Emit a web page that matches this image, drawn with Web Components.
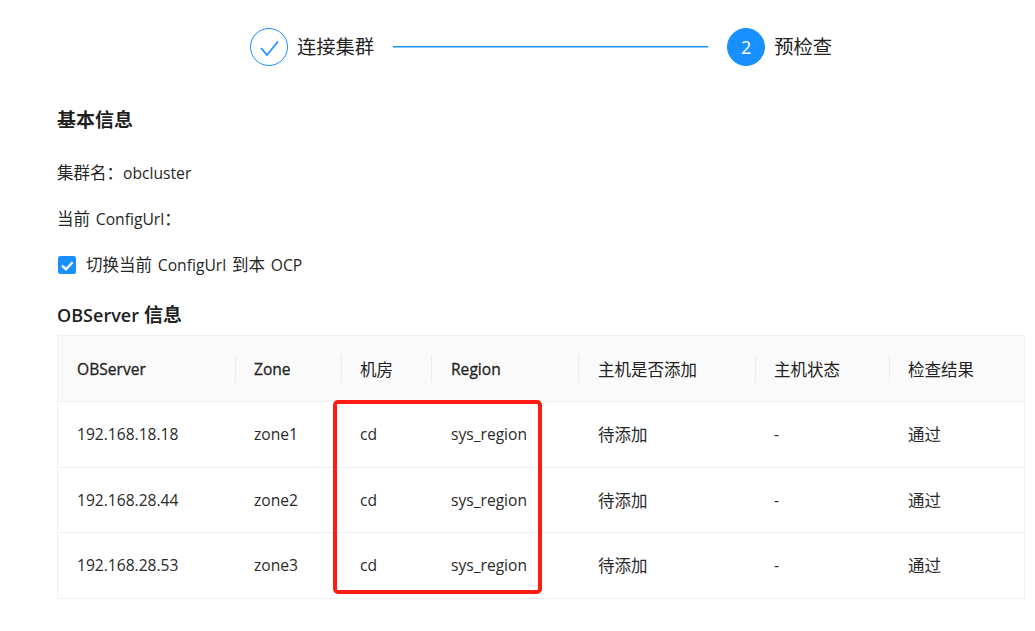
<!DOCTYPE html>
<html lang="zh">
<head>
<meta charset="utf-8">
<title>预检查</title>
<style>
    html, body { margin: 0; background: #fff; }
    body {
        width: 1035px;
        height: 631px;
        overflow: hidden;
        font-family: "Open Sans", "Noto Sans CJK SC", sans-serif;
        font-size: 16.5px;
        color: #262626;
    }
</style>
</head>
<body>
<precheck-page>
    <step-bar></step-bar>
    <section-title style="margin-top: 40px">基本信息</section-title>
    <info-line style="margin-top: 27px">集群名：<la-t>obcluster</la-t></info-line>
    <info-line style="margin-top: 22px">当前 <la-t>ConfigUrl</la-t>：</info-line>
    <check-line style="margin-top: 22px">切换当前 <la-t>ConfigUrl</la-t> 到本 <la-t>OCP</la-t></check-line>
    <section-title style="margin-top: 24px"><la-t>OBServer</la-t> 信息</section-title>
    <server-table style="margin-top: 6px"></server-table>
</precheck-page>

<script>
// Latin runs are set a little smaller so Open Sans takes the width of the original face
class LaT extends HTMLElement {
    constructor() {
        super();
        this.attachShadow({mode: 'open'}).innerHTML = `
            <style>
                :host { display: inline-block; font-size: .95em; }
            </style>
            <slot></slot>`;
    }
}

class PrecheckPage extends HTMLElement {
    constructor() {
        super();
        this.attachShadow({mode: 'open'}).innerHTML = `
            <style>
                :host { display: block; padding: 28px 10px 0 57px; }
            </style>
            <slot></slot>`;
    }
}

class StepBar extends HTMLElement {
    constructor() {
        super();
        this.attachShadow({mode: 'open'}).innerHTML = `
            <style>
                :host { display: flex; align-items: center; height: 38px; padding-left: 193px; font-size: 19.3px; color: #222; }
                .circle {
                    width: 38px; height: 38px; box-sizing: border-box; border-radius: 50%;
                    border: 1.5px solid #1890ff; display: flex; align-items: center; justify-content: center;
                    flex: none;
                }
                .circle.on { background: #1890ff; color: #fff; font-size: 18px; }
                .label { margin-left: 9px; white-space: nowrap; line-height: 38px; }
                .line { width: 315px; height: 2px; background: linear-gradient(#1890ff 50%, #8cc8ff 50%); margin: 0 19px; flex: none; }
            </style>
            <div class="circle">
                <svg width="20" height="17" viewBox="0 0 20 17" fill="none">
                    <path d="M2 9 L8 16 L19 2.5" stroke="#1890ff" stroke-width="1.7"/>
                </svg>
            </div>
            <span class="label">连接集群</span>
            <div class="line"></div>
            <div class="circle on">2</div>
            <span class="label">预检查</span>`;
    }
}

class SectionTitle extends HTMLElement {
    constructor() {
        super();
        this.attachShadow({mode: 'open'}).innerHTML = `
            <style>
                :host { display: block; font-size: 19px; font-weight: 600; line-height: 28px; color: #1f1f1f; }
            </style>
            <slot></slot>`;
    }
}

class InfoLine extends HTMLElement {
    constructor() {
        super();
        this.attachShadow({mode: 'open'}).innerHTML = `
            <style>
                :host { display: block; line-height: 24px; word-spacing: 1.5px; }
            </style>
            <slot></slot>`;
    }
}

class CheckLine extends HTMLElement {
    constructor() {
        super();
        this.attachShadow({mode: 'open'}).innerHTML = `
            <style>
                :host { display: flex; align-items: center; line-height: 24px; word-spacing: 1.5px; }
                .box {
                    width: 18px; height: 18px; margin: 0 10px 0 1px; border-radius: 2.5px; background: #1890ff;
                    display: flex; flex: none;
                }
            </style>
            <span class="box">
                <svg width="18" height="18" viewBox="0 0 18 18" fill="none">
                    <path d="M4 9.6 L8 13.2 L14.6 6.2" stroke="#fff" stroke-width="2.4"/>
                </svg>
            </span>
            <span><slot></slot></span>`;
    }
}

class ServerTable extends HTMLElement {
    constructor() {
        super();
        const head = ['OBServer', 'Zone', '机房', 'Region', '主机是否添加', '主机状态', '检查结果'];
        const rows = [
            ['192.168.18.18', 'zone1', 'cd', 'sys_region', '待添加', '-', '通过'],
            ['192.168.28.44', 'zone2', 'cd', 'sys_region', '待添加', '-', '通过'],
            ['192.168.28.53', 'zone3', 'cd', 'sys_region', '待添加', '-', '通过']
        ];
        const widths = [177, 106, 90, 147, 177, 134, 135];
        const isLatin = t => /^[\x00-\x7f]+$/.test(t);
        const cell = (tag, t) => `<${tag}${isLatin(t) ? ' class="la"' : ''}>${t}</${tag}>`;
        this.attachShadow({mode: 'open'}).innerHTML = `
            <style>
                :host { display: block; position: relative; width: 968px; }
                table { border-collapse: separate; border-spacing: 0; table-layout: fixed; width: 968px; border: 1px solid #f0f0f0; border-bottom: 0; box-sizing: border-box; }
                th, td { padding: 0 0 0 19px; text-align: left; border-bottom: 1px solid #f0f0f0; white-space: nowrap; }
                th:nth-child(4), td:nth-child(4), th:nth-child(5), td:nth-child(5) { padding-left: 20px; }
                th { height: 65px; background: #fafafa; font-weight: 400; color: #222; position: relative; border-bottom-width: 1.5px; }
                th.la { -webkit-text-stroke: .3px #222; }
                .la { font-size: 15.6px; }
                th + th::before {
                    content: ''; position: absolute; left: 0; top: 50%; height: 27px; width: 1px;
                    margin-top: -13.5px; background: #ececec;
                }
                td { height: 64.5px; color: #2a2a2a; }
                .mark {
                    position: absolute; left: 276px; top: 65px; width: 209px; height: 194px; box-sizing: border-box;
                    border: 4px solid #fe1c12; border-radius: 5px;
                }
            </style>
            <table>
                <colgroup>${widths.map(w => `<col style="width:${w}px">`).join('')}</colgroup>
                <thead><tr>${head.map(h => cell('th', h)).join('')}</tr></thead>
                <tbody>${rows.map(r => `<tr>${r.map(c => cell('td', c)).join('')}</tr>`).join('')}</tbody>
            </table>
            <div class="mark"></div>`;
    }
}

customElements.define('la-t', LaT);
customElements.define('precheck-page', PrecheckPage);
customElements.define('step-bar', StepBar);
customElements.define('section-title', SectionTitle);
customElements.define('info-line', InfoLine);
customElements.define('check-line', CheckLine);
customElements.define('server-table', ServerTable);
</script>
</body>
</html>
